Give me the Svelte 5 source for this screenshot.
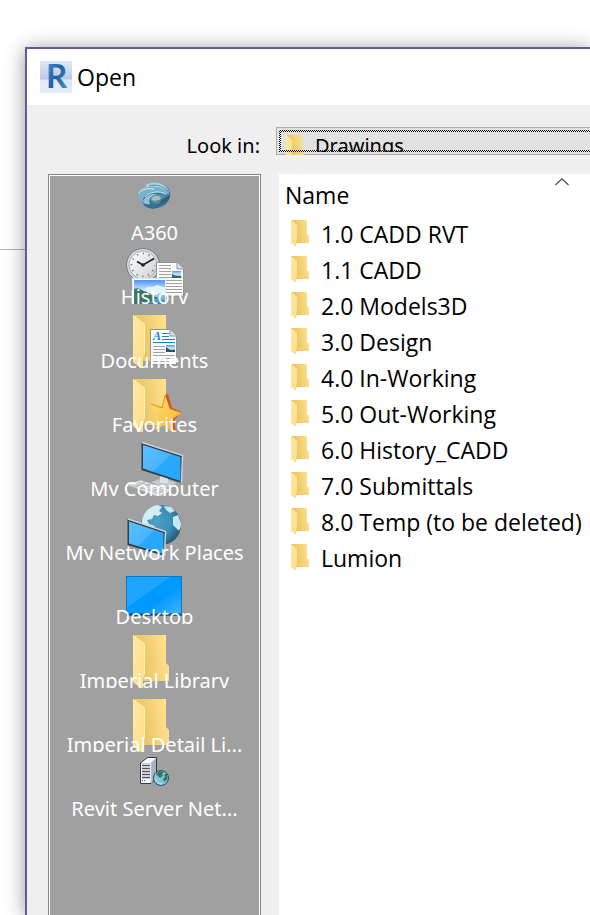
<script>
  const places = [
    { icon: 'a360', label: 'A360' },
    { icon: 'history', label: 'History' },
    { icon: 'documents', label: 'Documents' },
    { icon: 'favorites', label: 'Favorites' },
    { icon: 'computer', label: 'My Computer' },
    { icon: 'network', label: 'My Network Places' },
    { icon: 'desktop', label: 'Desktop' },
    { icon: 'folder', label: 'Imperial Library' },
    { icon: 'folder', label: 'Imperial Detail Li...' },
    { icon: 'server', label: 'Revit Server Net...' }
  ];

  const folders = [
    '1.0 CADD RVT',
    '1.1 CADD',
    '2.0 Models3D',
    '3.0 Design',
    '4.0 In-Working',
    '5.0 Out-Working',
    '6.0 History_CADD',
    '7.0 Submittals',
    '8.0 Temp (to be deleted)',
    'Lumion'
  ];
</script>

<!-- Gradients shared by all icons -->
<svg class="defs" width="0" height="0" aria-hidden="true">
  <defs>
    <linearGradient id="back" x1="0" x2="1" y1="0.6" y2="0.4">
      <stop offset="0.3" stop-color="#ecc766" /><stop offset="1" stop-color="#ffe391" />
    </linearGradient>
    <linearGradient id="flap" x1="0" x2="1" y1="0" y2="1">
      <stop offset="0" stop-color="#ffe9a6" /><stop offset="1" stop-color="#fbdd88" />
    </linearGradient>
    <linearGradient id="screen" x1="0" x2="1" y1="0" y2="1">
      <stop offset="0" stop-color="#5cc0ff" /><stop offset="0.5" stop-color="#4ab5ff" />
      <stop offset="0.51" stop-color="#2ba8ff" /><stop offset="1" stop-color="#27a8ff" />
    </linearGradient>
    <linearGradient id="desk" x1="0" x2="1" y1="0" y2="1">
      <stop offset="0" stop-color="#1ea5ff" /><stop offset="0.4" stop-color="#1ea5ff" />
      <stop offset="0.41" stop-color="#0099ff" /><stop offset="0.6" stop-color="#0099ff" /><stop offset="1" stop-color="#46b6ff" />
    </linearGradient>
    <radialGradient id="globe" cx="0.4" cy="0.4" r="0.65">
      <stop offset="0" stop-color="#4ba2c9" /><stop offset="0.6" stop-color="#3b8bb2" /><stop offset="1" stop-color="#235873" />
    </radialGradient>
    <linearGradient id="sky" x1="0" x2="0" y1="0" y2="1">
      <stop offset="0" stop-color="#4e93f5" /><stop offset="0.45" stop-color="#d5ecfb" /><stop offset="1" stop-color="#2c80b8" />
    </linearGradient>
    <linearGradient id="star" x1="0" x2="1" y1="0" y2="1">
      <stop offset="0" stop-color="#ffe06e" /><stop offset="0.6" stop-color="#fcc74a" /><stop offset="1" stop-color="#f29a2a" />
    </linearGradient>
    <linearGradient id="swirl" x1="0" x2="1" y1="0" y2="1">
      <stop offset="0" stop-color="#b7dce8" /><stop offset="0.5" stop-color="#5c9dbb" /><stop offset="1" stop-color="#2c617f" />
    </linearGradient>
    <linearGradient id="clock" x1="0" x2="1" y1="0" y2="1">
      <stop offset="0" stop-color="#ffffff" /><stop offset="1" stop-color="#cbd0d4" />
    </linearGradient>
    <linearGradient id="tile" x1="0" x2="0" y1="0" y2="1">
      <stop offset="0" stop-color="#dfe9f7" /><stop offset="0.55" stop-color="#b9cbe8" /><stop offset="0.6" stop-color="#dbe6f5" />
    </linearGradient>
    <linearGradient id="logo" x1="0" x2="1" y1="0" y2="1">
      <stop offset="0.1" stop-color="#3f8fd3" /><stop offset="0.5" stop-color="#245ea6" /><stop offset="1" stop-color="#4b9fb5" />
    </linearGradient>
  </defs>
</svg>

{#snippet bigFolder()}
  <path d="M11 11H44V39L47 42V57H11z" fill="url(#back)" />
  <path d="M11 11L23 20V50L21 54V66L11 58z" fill="url(#flap)" />
  <path d="M11.500 11.500L22.500 20V50" fill="none" stroke="#fff0bd" />
{/snippet}

{#snippet placeIcon(name)}
  <svg class="place-icon" viewBox="0 0 65 64" aria-hidden="true">
    {#if name === 'a360'}
      <path d="M16 18C18 13 22 11 25 11C28 7 36 6 41 8C47 10 49 15 48 20C47 26 43 30 38 31C31 34 22 32 20 27C20 24 16 22 16 18z" fill="url(#swirl)" />
      <path d="M16 18C19 12 27 10 34 11C42 12 47 15 48 20C43 15 34 14 28 16C22 18 20 21 20 26C17 24 15 21 16 18z" fill="#79b2c8" />
      <path d="M24 9C30 5 44 6 47 16C40 11 32 10 24 11z" fill="#a9d6e5" />
      <path d="M27 10C33 8 41 10 46 15" fill="none" stroke="#4f8fae" />
      <path d="M21 24C23 17 33 14 41 19C36 17 29 20 29 24C30 29 37 29 42 28C34 36 20 33 21 24z" fill="#39708f" />
      <path d="M21 25C24 19 30 17 35 18C29 20 26 23 28 28C24 29 21 27 21 25z" fill="#90c3d8" />
      <path d="M29 23C31 19 37 19 39 22C38 25 31 26 29 23z" fill="#b2b9bb" />
      <path d="M39 24C44 22 47 19 48 17C49 25 43 29 35 29C38 28 39 26 39 24z" fill="#2d6380" />
      <path d="M17 17C20 13 26 12 32 13M23 21C27 16 37 14 44 18" fill="none" stroke="#d6edf3" />
    {:else if name === 'history'}
      <circle cx="21" cy="25" r="16.500" fill="#d4dadd" stroke="#727a80" />
      <circle cx="21" cy="25" r="14" fill="url(#clock)" stroke="#a5adb2" />
      <circle cx="21" cy="25" r="11.500" fill="none" stroke="#6d7479" stroke-width="2" stroke-dasharray="1 5.020" stroke-dashoffset="0.500" />
      <path d="M15 21.500L21 25L32 18.500" fill="none" stroke="#1e2225" stroke-width="1.600" />
      <circle cx="21" cy="25" r="1.800" fill="#1e2225" />
      <path d="M34.500 22.500H55L61.500 29V56H34.500z" fill="#fafafa" stroke="#8f9599" />
      <path d="M55 22.500V29H61.500" fill="#dcdfe1" stroke="#8f9599" />
      <path d="M37 25.500H49M37 28.500H49M37 31.500H49M37 34.500H49M37 37.500H60M37 40.500H60M37 43.500H60M37 46.500H60M37 49.500H60M37 52.500H60" stroke="#9da2a6" />
      <rect x="50" y="31" width="9" height="7" fill="url(#sky)" />
      <path d="M50 34L54 36L59 36V38H50z" fill="#28704f" />
      <rect x="10.500" y="38.500" width="33" height="27" fill="#fff" stroke="#e6e9ea" />
      <rect x="12" y="40" width="31" height="24" fill="url(#sky)" />
      <path d="M23 49C26 45 31 48 33 46C36 43 38 48 43 47V53H26z" fill="#e5f4fb" />
      <path d="M12 49C16 47 19 50 22 51C27 53 30 55 36 58L24 64H12z" fill="#3e7562" />
    {:else if name === 'documents'}
      {@render bigFolder()}
      <path d="M28.500 25.500H48L54.500 32V60.500H28.500z" fill="#fbfbfb" stroke="#8e9498" />
      <path d="M48 25.500V32H54.500" fill="#d9dcdd" stroke="#8e9498" />
      <text x="31" y="36" class="glyph">A</text>
      <path d="M40 29.500H47M40 32.500H47M40 35.500H53M31 38.500H53" stroke="#1583c7" />
      <path d="M31 42.500H43M31 45.500H43M31 48.500H43M31 51.500H53M31 54.500H53M31 57.500H53" stroke="#a3a6a8" />
      <rect x="44" y="41" width="9" height="7" fill="url(#sky)" />
      <path d="M44 43L48 46L53 46V48H44z" fill="#285c46" />
    {:else if name === 'favorites'}
      {@render bigFolder()}
      <path d="M43 27L46 26L50 40L60 44L52 52L54 64H50L42 50z" fill="#d9531e" />
      <path d="M43 27L48 41L60 45L50 51L51 65L42 57L33 62L36 47L28 36L40 39z" fill="url(#star)" />
      <path d="M29 36L40 40L43 28" fill="none" stroke="#e58a2d" />
    {:else if name === 'computer'}
      <path d="M29 50L41 46L55 51L44 56z" fill="#c3c9cd" />
      <path d="M38 44H46V51H38z" fill="#dde1e3" />
      <path d="M19.500 10.500L60.500 23.500L59.500 51L19.500 38z" fill="#333d45" />
      <path d="M20 10.500L60.500 23.500L59.500 51" fill="none" stroke="#ccd3d8" stroke-width="1.500" />
      <path d="M21 13L58.500 25V49L21 36.500z" fill="url(#screen)" />
      <path d="M6 53L18 48L50 58L39 64H34z" fill="#e4e6e7" stroke="#aeb3b6" stroke-width="0.700" />
      <path d="M10 53L38 62M13 51.500L42 60.500M16 50L45 59M13 55L23 50M18 57L29 51.500M24 59L34 53M29 60.500L39 55M34 62L44 57" stroke="#a4a9ac" stroke-width="0.800" />
    {:else if name === 'network'}
      <circle cx="39" cy="29" r="20" fill="url(#globe)" />
      <path d="M20 26C20 18 27 10 36 9L40 11L37 15L40 17L36 20L32 19L30 23L25 24L27 28L33 30L30 33L20 30z" fill="#d2eef4" />
      <path d="M42 10L49 11L53 15L48 17L44 14z" fill="#c4e7f0" />
      <path d="M51 21L56 19L59 27C59 33 57 36 55 33L51 29z" fill="#c9e9f1" />
      <path d="M23 60L30 56L42 60L35 64z" fill="#cbd1d4" />
      <path d="M5.500 23L43.500 35.500L42.500 60L5.500 49z" fill="#333d45" />
      <path d="M6 23L43.500 35.500L42.500 60" fill="none" stroke="#ccd3d8" stroke-width="1.500" />
      <path d="M7 25.500L41.500 37V58L7 47.500z" fill="url(#screen)" />
    {:else if name === 'desktop'}
      <rect x="4.500" y="16.500" width="55" height="39" fill="url(#desk)" stroke="#0878c0" />
      <path d="M5 54.500H59" stroke="#174e72" stroke-width="2" />
    {:else if name === 'server'}
      <path d="M18.500 11L25.500 5.500H34.500V25L29 31.500H18.500z" fill="#f8f9fa" stroke="#343c48" />
      <path d="M29 11L34 6V25L29 31z" fill="#a8b1bf" />
      <path d="M19 11.500H29V31" fill="none" stroke="#cbd0d6" />
      <path d="M20 13.500H28M20 16.500H28M20 19.500H28M20 22.500H28M20 25.500H28" stroke="#4c5561" stroke-width="1.300" />
      <path d="M20 28.500H21M22 28.500H23" stroke="#4c5561" />
      <circle cx="39" cy="26" r="7.500" fill="#83c3de" stroke="#244e69" />
      <path d="M34 22L38 19L42 20L40 22L41 24L38 26L36 24zM42 22L45 22L45.500 27L42 30L41 27L43 25z" fill="#2f7b52" />
      <path d="M33 27C34 30 37 32 40 32" fill="none" stroke="#c9eaf5" />
    {:else}
      {@render bigFolder()}
    {/if}
  </svg>
{/snippet}

{#snippet smallFolder()}
  <svg class="small-folder" viewBox="0 0 20 28" aria-hidden="true">
    <path d="M0 0H16V14L18 16V22L19 23H0z" fill="url(#back)" />
    <path d="M0 0L6 5V20L5 22V27L0 23z" fill="url(#flap)" />
  </svg>
{/snippet}

<main>
  <section class="dialog" aria-labelledby="title">
    <header>
      <svg class="logo" viewBox="0 0 32 32" aria-hidden="true">
        <rect width="32" height="32" fill="url(#tile)" />
        <path d="M0 19L32 25V32H0z" fill="#e3ebf7" />
        <text x="6" y="27" class="mark">R</text>
      </svg>
      <h1 id="title">Open</h1>
    </header>

    <div class="look">
      <label for="look-in">Look in:</label>
      <div class="combo">
        <div class="clip">
          <select id="look-in">
            <option>Drawings</option>
          </select>
        </div>
        <div class="combo-icon">{@render smallFolder()}</div>
        <div class="focus"></div>
      </div>
    </div>

    <div class="content">
      <nav aria-label="Places">
        {#each places as place}
          <button type="button" class="place">
            {@render placeIcon(place.icon)}
            <span class="place-label">{place.label}</span>
          </button>
        {/each}
      </nav>

      <div class="files">
        <table>
          <thead>
            <tr>
              <th scope="col" aria-sort="ascending">
                <div class="head">
                  <span>Name</span>
                  <svg class="caret" viewBox="0 0 14 8" aria-hidden="true">
                    <path d="M0.500 7L7 0.800L13.500 7" fill="none" stroke="#444" stroke-width="1.100" />
                  </svg>
                </div>
              </th>
            </tr>
          </thead>
          <tbody>
            {#each folders as folder}
              <tr>
                <td>
                  <div class="row">
                    {@render smallFolder()}
                    <span>{folder}</span>
                  </div>
                </td>
              </tr>
            {/each}
          </tbody>
        </table>
      </div>
    </div>
  </section>
</main>

<style>
  :global(body) {
    margin: 0;
    background: #fff;
  }

  .defs {
    position: absolute;
  }

  main {
    position: relative;
    box-sizing: border-box;
    display: flex;
    min-height: 100vh;
    padding: 47px 0 0 25px;
    overflow: hidden;
    color: #000;
    font-family: 'Open Sans', 'Noto Sans', sans-serif;
    font-size: 23px;
  }

  /* Edge of the window behind the dialog */
  main::before {
    content: '';
    position: absolute;
    top: 249px;
    left: 0;
    width: 25px;
    border-top: 1px solid #b4b4b4;
  }

  .dialog {
    position: relative;
    flex: 1;
    min-width: 0;
    display: flex;
    flex-direction: column;
    border: 2px solid #665a92;
    border-width: 2px 0 0 2px;
    background: #efefef;
    box-shadow: 0 2px 18px rgba(0, 0, 0, 0.42);
  }

  header {
    display: flex;
    align-items: center;
    gap: 5px;
    height: 56px;
    padding-left: 13px;
    background: #fff;
  }

  .logo {
    width: 32px;
    height: 32px;
    overflow: visible;
  }

  .mark {
    font: bold 33px Lato, sans-serif;
    fill: url(#logo);
  }

  .glyph {
    font: italic bold 12px 'Liberation Serif', serif;
    fill: #1583c7;
  }

  h1 {
    margin: 0;
    font-size: 23px;
    font-weight: 400;
    line-height: 32px;
  }

  .look {
    display: flex;
    align-items: flex-start;
    gap: 16px;
    height: 47px;
    padding-top: 22px;
    font-family: 'Noto Sans', sans-serif;
    font-size: 20px;
    line-height: 28px;
  }

  .look label {
    width: 233px;
    padding-top: 5px;
    text-align: right;
  }

  .combo {
    position: relative;
    box-sizing: border-box;
    flex: 1;
    height: 28px;
    border: 1px solid #adadad;
    border-right: 0;
    background: #e1e1e1;
  }

  .clip {
    height: 24px;
    overflow: hidden;
  }

  select {
    appearance: none;
    width: 100%;
    height: 34px;
    margin: 0;
    padding: 0 0 0 38px;
    border: 0;
    outline: 0;
    background: transparent;
    color: #000;
    font: 20px 'Noto Sans', sans-serif;
  }

  .combo-icon {
    position: absolute;
    top: 7px;
    left: 9px;
    height: 20px;
    overflow: hidden;
    pointer-events: none;
  }

  /* Dithered focus rectangle, open on the right */
  .focus {
    position: absolute;
    inset: 2px 0 2px 2px;
    --dither: repeating-conic-gradient(#111 0 25%, transparent 0 50%);
    background:
      var(--dither) top left / 2px 2px repeat-x,
      var(--dither) bottom left / 2px 2px repeat-x,
      var(--dither) top left / 2px 2px repeat-y;
    pointer-events: none;
  }

  .content {
    flex: 1;
    display: flex;
    gap: 18px;
    padding-left: 21px;
  }

  nav {
    box-sizing: border-box;
    flex: none;
    width: 213px;
    border: 1px solid #80858f;
    border-bottom: 0;
    box-shadow: inset 1px 1px 0 #fff, inset -1px 0 0 #fff;
    background: #a0a0a0;
    padding: 1px;
  }

  .place {
    display: grid;
    justify-items: center;
    width: 100%;
    height: 64px;
    margin: 0;
    padding: 0;
    border: 0;
    background: transparent;
    color: #fff;
    font: 20px/30px 'Noto Sans', sans-serif;
  }

  .place-icon {
    grid-area: 1 / 1;
    width: 65px;
    height: 64px;
  }

  .place-label {
    grid-area: 1 / 1;
    align-self: end;
    height: 22px;
    overflow: hidden;
    white-space: nowrap;
  }

  .files {
    flex: 1;
    min-width: 0;
    background: #fff;
  }

  table {
    width: 100%;
    border-collapse: collapse;
  }

  th,
  td {
    padding: 0;
    font-weight: 400;
    text-align: left;
    white-space: nowrap;
  }

  .head {
    display: flex;
    justify-content: space-between;
    height: 42px;
    padding: 0 21px 0 6px;
    line-height: 42px;
  }

  .caret {
    width: 14px;
    height: 8px;
    margin-top: 4px;
  }

  .row {
    display: flex;
    align-items: center;
    gap: 10px;
    height: 36px;
    padding-left: 12px;
    line-height: 36px;
  }

  .small-folder {
    display: block;
    flex: none;
    width: 20px;
    height: 28px;
  }
</style>
